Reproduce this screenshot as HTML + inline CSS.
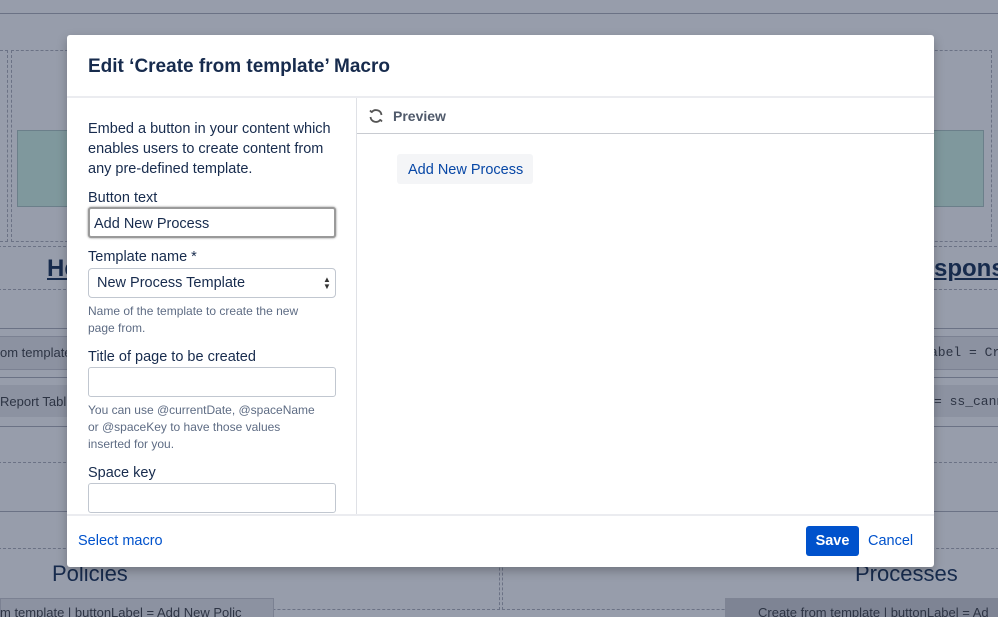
<!DOCTYPE html>
<html><head><style>
html,body{margin:0;width:998px;height:617px;overflow:hidden}
body{background:#979dab;font-family:"Liberation Sans",sans-serif;position:relative;color:#172b4d}
.a{position:absolute;white-space:nowrap}
.dash{position:absolute;border:1px dashed #6b7285}
.dlg{position:absolute;left:67px;top:35px;width:867px;height:532px;background:#fff;border-radius:3px;box-shadow:0 4px 10px rgba(0,0,0,.25)}
.lbl{font-size:14.5px;color:#172b4d}
.inp{position:absolute;left:21px;width:248px;height:28px;border:1px solid #c1c7d0;border-radius:3px;background:#fff;box-sizing:border-box}
.hint{font-size:12px;color:#5e6c84;line-height:17px;white-space:normal}
</style></head><body>
<div class="a" style="left:0;top:13px;width:998px;height:1px;background:#6b7285"></div>
<div class="dash" style="left:-5px;top:50px;width:11px;height:190px"></div>
<div class="dash" style="left:11px;top:50px;width:60px;height:190px"></div>
<div class="a" style="left:17px;top:130px;width:60px;height:75px;background:#7f989d;border:1px solid #6b7f8a"></div>
<div class="dash" style="left:920px;top:50px;width:70px;height:190px"></div>
<div class="a" style="left:930px;top:130px;width:52px;height:75px;background:#7f989d;border:1px solid #6b7f8a"></div>
<div class="dash" style="left:-2px;top:246px;width:1002px;height:42px"></div>
<div class="a" style="left:47px;top:255px;font-size:24px;font-weight:bold;text-decoration:underline">He</div>
<div class="a" style="left:934px;top:255px;font-size:24px;font-weight:bold;text-decoration:underline">sponse</div>
<div class="a" style="left:0;top:328px;width:998px;height:1px;background:#6b7285"></div>
<div class="a" style="left:0;top:336px;width:998px;height:32px;background:#8c92a1;border-top:1px solid #7b8192;border-bottom:1px solid #7b8192"></div>
<div class="a" style="left:0;top:345px;font-size:13px;color:#2d3444">om template</div>
<div class="a" style="left:930px;top:345px;font-size:13px;color:#2d3444;font-family:'Liberation Mono',monospace">abel = Cre</div>
<div class="a" style="left:0;top:377px;width:998px;height:1px;background:#6b7285"></div>
<div class="a" style="left:0;top:385px;width:998px;height:32px;background:#8c92a1"></div>
<div class="a" style="left:0;top:394px;font-size:13px;color:#2d3444">Report Tabl</div>
<div class="a" style="left:934px;top:394px;font-size:13px;color:#2d3444;font-family:'Liberation Mono',monospace">= ss_canne</div>
<div class="a" style="left:0;top:426px;width:998px;height:1px;background:#6b7285"></div>
<div class="dash" style="left:-2px;top:462px;width:1002px;height:10px;border-bottom:none"></div>
<div class="a" style="left:0;top:511px;width:998px;height:1px;background:#6b7285"></div>
<div class="dash" style="left:-2px;top:548px;width:500px;height:60px"></div>
<div class="dash" style="left:502px;top:548px;width:500px;height:60px"></div>
<div class="a" style="left:52px;top:561px;font-size:22px">Policies</div>
<div class="a" style="left:855px;top:561px;font-size:22px">Processes</div>
<div class="a" style="left:0;top:598px;width:272px;height:25px;background:#8c92a1;border:1px solid #7b8192"></div>
<div class="a" style="left:0;top:605px;font-size:13px;color:#2d3444">m template | buttonLabel = Add New Polic</div>
<div class="a" style="left:725px;top:598px;width:280px;height:25px;background:#7e8494"></div>
<div class="a" style="left:758px;top:605px;font-size:13px;color:#2d3444">Create from template | buttonLabel = Ad</div>

<div class="dlg">
 <div class="a" style="left:21px;top:21px;font-size:19px;font-weight:bold;color:#172b4d">Edit ‘Create from template’ Macro</div>
 <div class="a" style="left:0;top:61px;width:867px;height:2px;background:#ebecf0"></div>
 <div class="a" style="left:289px;top:63px;width:1px;height:416px;background:#dfe1e6"></div>
 <div class="a" style="left:21px;top:84px;width:255px;font-size:14.5px;line-height:20px;white-space:normal">Embed a button in your content which enables users to create content from any pre-defined template.</div>
 <div class="a lbl" style="left:21px;top:155px">Button text</div>
 <div class="inp" style="top:172px;height:31px;border:2px solid #9a9a9a;box-shadow:0 0 2px #888"></div>
 <div class="a" style="left:27px;top:181px;font-size:14.5px">Add New Process</div>
 <div class="a lbl" style="left:21px;top:214px">Template name *</div>
 <div class="inp" style="top:233px;height:30px;border-radius:4px"></div>
 <div class="a" style="left:30px;top:240px;font-size:14.5px">New Process Template</div>
 <div class="a" style="left:256px;top:241px;font-size:8px;line-height:7px;color:#333">▲<br>▼</div>
 <div class="a hint" style="left:21px;top:268px;width:240px">Name of the template to create the new page from.</div>
 <div class="a lbl" style="left:21px;top:314px">Title of page to be created</div>
 <div class="inp" style="top:332px;height:30px"></div>
 <div class="a hint" style="left:21px;top:367px;width:260px;white-space:nowrap">You can use @currentDate, @spaceName<br>or @spaceKey to have those values<br>inserted for you.</div>
 <div class="a lbl" style="left:21px;top:430px">Space key</div>
 <div class="inp" style="top:448px;height:30px"></div>
 <div class="a" style="left:290px;top:98px;width:577px;height:1px;background:#c8cbd1"></div>
 <svg class="a" style="left:300px;top:72px" width="18" height="18" viewBox="0 0 18 18" fill="none" stroke="#555" stroke-width="1.8"><path d="M3.5 10a5.5 5.5 0 0 0 10 2.5M14.5 8a5.5 5.5 0 0 0-10-2.5"/><path d="M13 12.5l2 2M5 5.5L3 3.5"/></svg>
 <div class="a" style="left:326px;top:73px;font-size:14px;font-weight:bold;color:#505a6b">Preview</div>
 <div class="a" style="left:330px;top:119px;width:136px;height:30px;background:#f4f5f7;border-radius:3px"></div>
 <div class="a" style="left:341px;top:127px;font-size:14.5px;color:#0747a6">Add New Process</div>
 <div class="a" style="left:0;top:479px;width:867px;height:2px;background:#ebecf0"></div>
 <div class="a" style="left:11px;top:498px;font-size:14.5px;color:#0052cc">Select macro</div>
 <div class="a" style="left:739px;top:491px;width:53px;height:30px;background:#0052cc;border-radius:3px;color:#fff;font-size:14.5px;font-weight:bold;text-align:center;line-height:30px">Save</div>
 <div class="a" style="left:801px;top:498px;font-size:14.5px;color:#0052cc">Cancel</div>
</div>
</body></html>
